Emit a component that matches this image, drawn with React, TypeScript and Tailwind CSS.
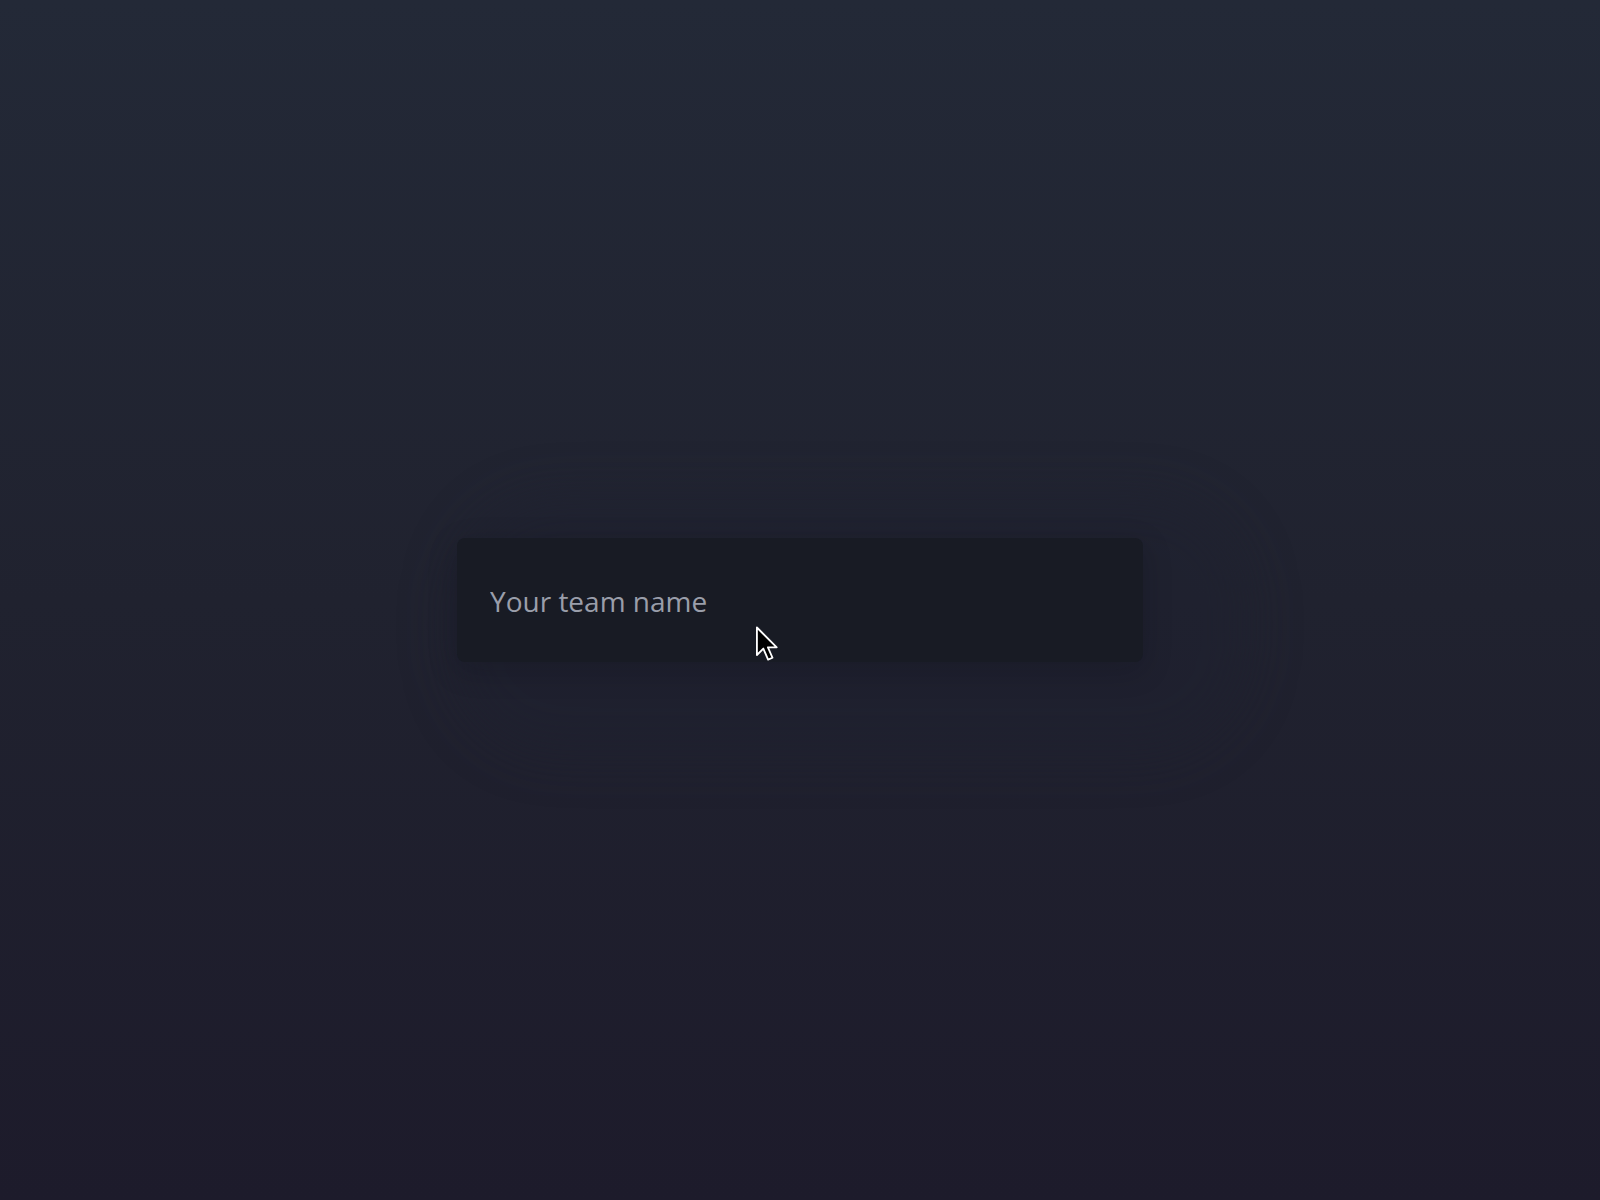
import React from "react";

const App = () => {
  return (
    <div className="relative w-full h-[1200px] overflow-hidden bg-gradient-to-b from-[#232937] via-[#20222f] to-[#1d1b2b] flex items-center justify-center font-['Open_Sans',sans-serif]">
      {/* Soft glow behind the field */}
      <div className="absolute left-[450px] top-[495px] w-[800px] h-[260px] rounded-[110px] bg-[#1e2130]/40 blur-xl" />
      {/* Input */}
      <div className="relative w-[686px] h-[124px] rounded-lg bg-[#181b24] shadow-[0_8px_30px_rgba(10,12,20,0.2)] flex items-center px-[33px]">
        <input
          placeholder="Your team name"
          className="w-full bg-transparent outline-none text-[28px] text-[#e5e7eb] placeholder:text-[#9a9eaa] translate-y-[1px]"
        />
      </div>
      {/* Mouse pointer */}
      <svg
        className="absolute left-[756px] top-[626px]"
        width="22"
        height="36"
        viewBox="0 0 12 19"
      >
        <path
          d="M0.5 0.5 L0.5 15.5 L4 12 L6.6 18 L9 17 L6.5 11.3 L11.3 11.3 Z"
          fill="#000"
          stroke="#fff"
          strokeWidth="1"
          strokeLinejoin="round"
        />
      </svg>
    </div>
  );
};

export default App;
